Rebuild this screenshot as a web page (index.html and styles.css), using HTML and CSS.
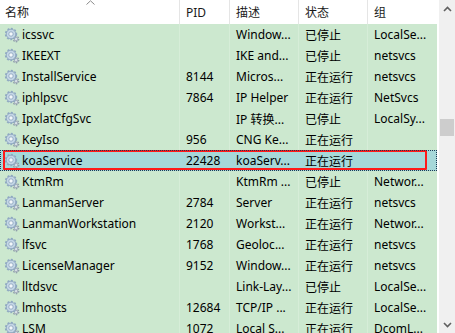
FILE: index.html
```html
<!DOCTYPE html>
<html>
<head>
<meta charset="utf-8">
<link rel="stylesheet" href="styles.css">
</head>
<body>
<svg width="0" height="0" class="defs">
  <defs>
    <g id="gear">
      <circle cx="12" cy="12" r="2.6" fill="none" stroke="#8896a4" stroke-width="1.6" stroke-dasharray="1.4 1.3"/>
      <circle cx="12" cy="12" r="2.4" fill="#a9b4bf"/>
      <circle cx="12" cy="12" r="1" fill="#e6edf2"/>
      <circle cx="7" cy="7" r="5.2" fill="none" stroke="#8fa9c2" stroke-width="2" stroke-dasharray="1.8 1.6"/>
      <circle cx="7" cy="7" r="4.8" fill="#c4d6e6" stroke="#86a0ba" stroke-width="0.8"/>
      <circle cx="7" cy="7" r="2.2" fill="#f4f8fb" stroke="#86a0ba" stroke-width="0.8"/>
    </g>
  </defs>
</svg>
<div class="window">
  <div class="list">
    <div class="head">
      <div class="hc name">名称<span class="sort"><svg width="9" height="5" viewBox="0 0 9 5"><path d="M0.5 4.5 L4.5 0.8 L8.5 4.5" fill="none" stroke="#8a8a8a" stroke-width="1"/></svg></span></div>
      <div class="hc">PID</div>
      <div class="hc">描述</div>
      <div class="hc">状态</div>
      <div class="hc">组</div>
    </div>
    <div class="rows">
      <div class="row"><div class="c name"><svg class="ico" width="16" height="16" viewBox="0 0 16 16"><use href="#gear"/></svg>icssvc</div><div class="c"></div><div class="c">Window...</div><div class="c">已停止</div><div class="c">LocalSe...</div></div>
      <div class="row"><div class="c name"><svg class="ico" width="16" height="16" viewBox="0 0 16 16"><use href="#gear"/></svg>IKEEXT</div><div class="c"></div><div class="c">IKE and...</div><div class="c">已停止</div><div class="c">netsvcs</div></div>
      <div class="row"><div class="c name"><svg class="ico" width="16" height="16" viewBox="0 0 16 16"><use href="#gear"/></svg>InstallService</div><div class="c">8144</div><div class="c">Micros...</div><div class="c">正在运行</div><div class="c">netsvcs</div></div>
      <div class="row"><div class="c name"><svg class="ico" width="16" height="16" viewBox="0 0 16 16"><use href="#gear"/></svg>iphlpsvc</div><div class="c">7864</div><div class="c">IP Helper</div><div class="c">正在运行</div><div class="c">NetSvcs</div></div>
      <div class="row"><div class="c name"><svg class="ico" width="16" height="16" viewBox="0 0 16 16"><use href="#gear"/></svg>IpxlatCfgSvc</div><div class="c"></div><div class="c">IP 转换...</div><div class="c">已停止</div><div class="c">LocalSy...</div></div>
      <div class="row"><div class="c name"><svg class="ico" width="16" height="16" viewBox="0 0 16 16"><use href="#gear"/></svg>KeyIso</div><div class="c">956</div><div class="c">CNG Ke...</div><div class="c">正在运行</div><div class="c"></div></div>
      <div class="row selected"><div class="c name"><svg class="ico" width="16" height="16" viewBox="0 0 16 16"><use href="#gear"/></svg>koaService</div><div class="c">22428</div><div class="c">koaServ...</div><div class="c">正在运行</div><div class="c"></div><div class="mark"></div></div>
      <div class="row"><div class="c name"><svg class="ico" width="16" height="16" viewBox="0 0 16 16"><use href="#gear"/></svg>KtmRm</div><div class="c"></div><div class="c">KtmRm ...</div><div class="c">已停止</div><div class="c">Networ...</div></div>
      <div class="row"><div class="c name"><svg class="ico" width="16" height="16" viewBox="0 0 16 16"><use href="#gear"/></svg>LanmanServer</div><div class="c">2784</div><div class="c">Server</div><div class="c">正在运行</div><div class="c">netsvcs</div></div>
      <div class="row"><div class="c name"><svg class="ico" width="16" height="16" viewBox="0 0 16 16"><use href="#gear"/></svg>LanmanWorkstation</div><div class="c">2120</div><div class="c">Workst...</div><div class="c">正在运行</div><div class="c">Networ...</div></div>
      <div class="row"><div class="c name"><svg class="ico" width="16" height="16" viewBox="0 0 16 16"><use href="#gear"/></svg>lfsvc</div><div class="c">1768</div><div class="c">Geoloc...</div><div class="c">正在运行</div><div class="c">netsvcs</div></div>
      <div class="row"><div class="c name"><svg class="ico" width="16" height="16" viewBox="0 0 16 16"><use href="#gear"/></svg>LicenseManager</div><div class="c">9152</div><div class="c">Window...</div><div class="c">正在运行</div><div class="c">netsvcs</div></div>
      <div class="row"><div class="c name"><svg class="ico" width="16" height="16" viewBox="0 0 16 16"><use href="#gear"/></svg>lltdsvc</div><div class="c"></div><div class="c">Link-Lay...</div><div class="c">已停止</div><div class="c">LocalSe...</div></div>
      <div class="row"><div class="c name"><svg class="ico" width="16" height="16" viewBox="0 0 16 16"><use href="#gear"/></svg>lmhosts</div><div class="c">12684</div><div class="c">TCP/IP ...</div><div class="c">正在运行</div><div class="c">LocalSe...</div></div>
      <div class="row"><div class="c name"><svg class="ico" width="16" height="16" viewBox="0 0 16 16"><use href="#gear"/></svg>LSM</div><div class="c">1072</div><div class="c">Local S...</div><div class="c">正在运行</div><div class="c">DcomL...</div></div>
    </div>
  </div>
  <div class="scrollbar">
    <div class="arrow up"><svg width="9" height="6" viewBox="0 0 9 6"><path d="M1 5 L4.5 1.5 L8 5" fill="none" stroke="#606060" stroke-width="1.6"/></svg></div>
    <div class="track"><div class="thumb"></div></div>
    <div class="arrow down"><svg width="9" height="6" viewBox="0 0 9 6"><path d="M1 1 L4.5 4.5 L8 1" fill="none" stroke="#606060" stroke-width="1.6"/></svg></div>
  </div>
</div>
</body>
</html>
```
FILE: styles.css
```css
html, body {
  margin: 0;
  padding: 0;
}
body {
  width: 455px;
  height: 333px;
  overflow: hidden;
  background: #ffffff;
  font-family: "Noto Sans", "Noto Sans CJK SC", sans-serif;
  font-size: 12px;
  color: #000;
}
.defs {
  position: absolute;
  width: 0;
  height: 0;
}
.window {
  display: flex;
  width: 455px;
  height: 333px;
}
.list {
  width: 437px;
  display: flex;
  flex-direction: column;
  overflow: hidden;
}
.head,
.row {
  display: grid;
  grid-template-columns: 180px 50px 69px 69px 69px;
}
.head {
  height: 24px;
  background: #fff;
  flex: none;
}
.hc {
  position: relative;
  display: flex;
  align-items: center;
  padding-left: 6px;
  border-right: 1px solid #e5e5e5;
  color: #1a1a1a;
  white-space: nowrap;
}
.hc.name {
  padding-left: 5px;
}
.hc:last-child {
  border-right: none;
}
.sort {
  position: absolute;
  left: 86px;
  top: 0;
  line-height: 0;
}
.rows {
  background: #cce8cf;
  flex: 1;
}
.row {
  position: relative;
  height: 21px;
}
.c {
  display: flex;
  align-items: center;
  padding-left: 6px;
  border-right: 1px solid #d6edd8;
  white-space: nowrap;
  overflow: hidden;
}
.c:last-child {
  border-right: none;
}
.c.name {
  padding-left: 4px;
}
.ico {
  flex: none;
  margin-right: 2px;
}
.row.selected {
  background: #a6d8d9;
}
.row.selected .c {
  border-right-color: #a6d8d9;
}
.row.selected::after {
  content: "";
  position: absolute;
  left: 0;
  top: 0;
  right: 0;
  bottom: 0;
  border: 1px dotted #1d3a55;
  pointer-events: none;
}
.mark {
  position: absolute;
  left: 3px;
  top: 0;
  width: 420px;
  height: 16px;
  border: 2px solid #ff1a1a;
  border-radius: 1px;
}
.scrollbar {
  width: 17px;
  margin-left: 1px;
  background: #f0f0f0;
  display: flex;
  flex-direction: column;
  border-left: 1px solid #fff;
  box-sizing: border-box;
}
.arrow {
  height: 17px;
  display: flex;
  align-items: center;
  justify-content: center;
  flex: none;
}
.track {
  flex: 1;
  padding-left: 1px;
  padding-right: 1px;
  padding-top: 102px;
}
.thumb {
  height: 17px;
  background: #cdcdcd;
}
```
